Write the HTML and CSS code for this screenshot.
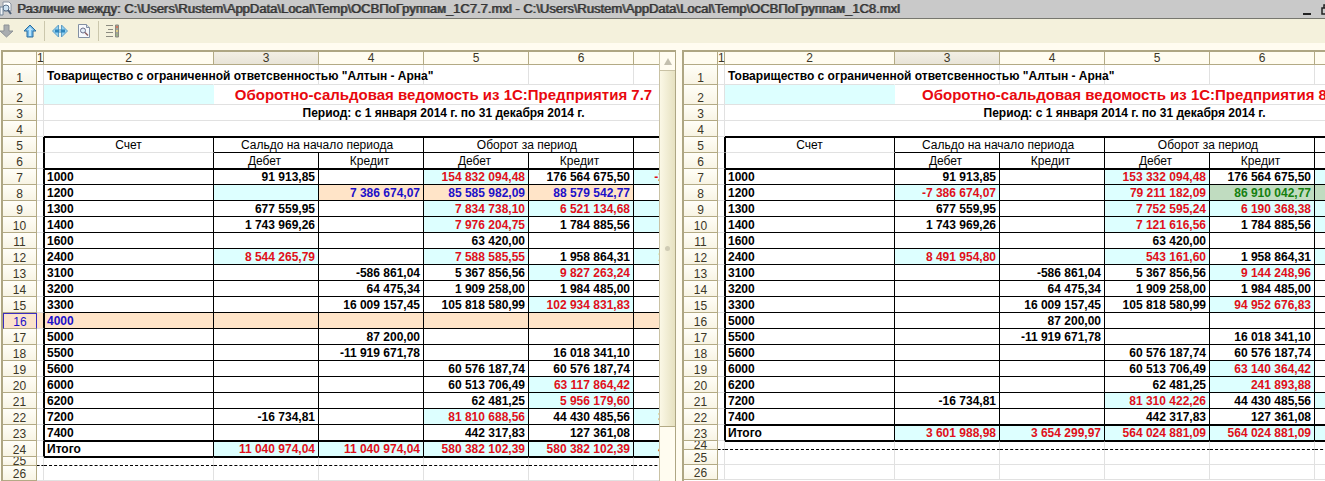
FILE: index.html
```html
<!DOCTYPE html>
<html lang="ru">
<head>
<meta charset="utf-8">
<title>Различие между файлами</title>
<link rel="stylesheet" href="styles.css">
</head>
<body>
<header class="titlebar">
  <svg class="app-icon" width="12" height="16" viewBox="0 0 12 16" aria-hidden="true"><path d="M3 1h6l2 2v7H3z" fill="#fff" stroke="#8a93a0"/><circle cx="6" cy="7" r="3" fill="#cfe3f2" stroke="#5a7088"/><path d="M8 9l3 4" stroke="#4e6078" stroke-width="2"/><path d="M0 6h3v8H0z" fill="#f4f7fa" stroke="#6f8296"/></svg>
  <h1>Различие между: C:\Users\Rustem\AppData\Local\Temp\ОСВПоГруппам_1С7.7.mxl - C:\Users\Rustem\AppData\Local\Temp\ОСВПоГруппам_1С8.mxl</h1>
  <div class="window-buttons">
    <button type="button" aria-label="Свернуть"><svg width="8" height="12" viewBox="0 0 8 12"><path d="M0 11h8" stroke="#222" stroke-width="2"/></svg></button>
    <button type="button" aria-label="Восстановить"><svg width="10" height="12" viewBox="0 0 10 12"><path d="M1 5h6v6H1z M3 5V2h6v6H7" fill="none" stroke="#222" stroke-width="1.5"/></svg></button>
  </div>
</header>
<nav class="toolbar">
  <button type="button" aria-label="Следующее различие"><svg width="14" height="14" viewBox="0 0 14 14"><path d="M4 1h5v6h4l-6.500 6L0 7h4z" fill="#a9adb0" stroke="#8d9296"/></svg></button>
  <button type="button" aria-label="Предыдущее различие"><svg width="14" height="14" viewBox="0 0 14 14"><path d="M7 1l6 6h-3v6H4V7H1z" fill="#6fb6e6" stroke="#2c6f9f"/><path d="M7 3l3 3H8v6H6V6H4z" fill="#b9e4fb"/></svg></button>
  <span class="divider"></span>
  <button type="button" aria-label="Сравнить"><svg width="16" height="14" viewBox="0 0 16 14"><path d="M6.500 1v12L.5 7zM9.500 1v12l6-6z" fill="#8fd0f2" stroke="#5f9cc2"/><path d="M3 7h10" stroke="#2f86bd" stroke-width="3"/><path d="M8 0v14" stroke="#e8f6ff" stroke-dasharray="2 1"/></svg></button>
  <button type="button" aria-label="Просмотр"><svg width="14" height="14" viewBox="0 0 14 14"><path d="M1.500.5h8l3 3v10h-11z" fill="#f7f9fc" stroke="#8390a3"/><path d="M9.500.5v3h3" fill="#d5dde7" stroke="#8390a3"/><circle cx="6" cy="6.500" r="2.500" fill="#e3edf6" stroke="#6c6f8b"/><path d="M8 8.500l3 3" stroke="#8b5f62" stroke-width="1.500"/></svg></button>
  <span class="divider"></span>
  <button type="button" aria-label="Список"><svg width="14" height="14" viewBox="0 0 14 14"><path d="M0 1.500h7M2 5.500h5M0 8.500h7M0 12.500h7" stroke="#8b8b80"/><path d="M9.500 1h3v12h-3z" fill="#a3a399" stroke="#8b8b80"/><path d="M11 2v2" stroke="#d27a63" stroke-width="2"/><path d="M11 6v2" stroke="#dccb80" stroke-width="2"/><path d="M11 10v2" stroke="#9ab384" stroke-width="2"/></svg></button>
</nav>
<main class="panes">
<section class="pane pane-left" aria-label="1С 7.7">
<div class="view">
<table>
<colgroup><col class="c-num"><col class="c-gap"><col class="c-acc"><col><col><col><col><col><col></colgroup>
<thead><tr><th></th><th>1</th><th>2</th><th class="current">3</th><th>4</th><th>5</th><th>6</th><th></th><th></th></tr></thead>
<tbody>
<tr class="tall"><th>1</th><td></td><td class="org">Товарищество с ограниченной ответсвенностью "Алтын - Арна"</td><td></td><td></td><td></td><td></td><td></td><td></td></tr>
<tr class="tall"><th>2</th><td></td><td class="title" colspan="7">Оборотно-сальдовая ведомость из 1С:Предприятия 7.7</td></tr>
<tr><th>3</th><td></td><td class="period" colspan="7">Период: с 1 января 2014 г. по 31 декабря 2014 г.</td></tr>
<tr class="above"><th>4</th><td></td><td colspan="7"></td></tr>
<tr class="grid head"><th>5</th><td></td><td class="open">Счет</td><td colspan="2">Сальдо на начало периода</td><td colspan="2">Оборот за период</td><td colspan="2"></td></tr>
<tr class="grid head"><th>6</th><td></td><td></td><td>Дебет</td><td>Кредит</td><td>Дебет</td><td>Кредит</td><td></td><td></td></tr>
<tr class="grid edge"><th>7</th><td></td><td>1000</td><td>91 913,85</td><td></td><td class="diff">154 832 094,48</td><td>176 564 675,50</td><td class="diff">-21 640 667,17</td><td></td></tr>
<tr class="grid"><th>8</th><td></td><td>1200</td><td class="diff"></td><td class="mark">7 386 674,07</td><td class="mark">85 585 982,09</td><td class="mark">88 579 542,77</td><td></td><td></td></tr>
<tr class="grid"><th>9</th><td></td><td>1300</td><td>677 559,95</td><td></td><td class="diff">7 834 738,10</td><td class="diff">6 521 134,68</td><td class="diff"></td><td></td></tr>
<tr class="grid"><th>10</th><td></td><td>1400</td><td>1 743 969,26</td><td></td><td class="diff">7 976 204,75</td><td>1 784 885,56</td><td class="diff"></td><td></td></tr>
<tr class="grid"><th>11</th><td></td><td>1600</td><td></td><td></td><td>63 420,00</td><td></td><td></td><td></td></tr>
<tr class="grid"><th>12</th><td></td><td>2400</td><td class="diff">8 544 265,79</td><td></td><td class="diff">7 588 585,55</td><td>1 958 864,31</td><td class="diff">14 173 987,03</td><td></td></tr>
<tr class="grid"><th>13</th><td></td><td>3100</td><td></td><td>-586 861,04</td><td>5 367 856,56</td><td class="diff">9 827 263,24</td><td></td><td></td></tr>
<tr class="grid"><th>14</th><td></td><td>3200</td><td></td><td>64 475,34</td><td>1 909 258,00</td><td>1 984 485,00</td><td></td><td></td></tr>
<tr class="grid"><th>15</th><td></td><td>3300</td><td></td><td>16 009 157,45</td><td>105 818 580,99</td><td class="diff">102 934 831,83</td><td></td><td></td></tr>
<tr class="grid selected"><th>16</th><td></td><td>4000</td><td></td><td></td><td></td><td></td><td></td><td></td></tr>
<tr class="grid"><th>17</th><td></td><td>5000</td><td></td><td>87 200,00</td><td></td><td></td><td></td><td></td></tr>
<tr class="grid"><th>18</th><td></td><td>5500</td><td></td><td>-11 919 671,78</td><td></td><td>16 018 341,10</td><td></td><td></td></tr>
<tr class="grid"><th>19</th><td></td><td>5600</td><td></td><td></td><td>60 576 187,74</td><td>60 576 187,74</td><td></td><td></td></tr>
<tr class="grid"><th>20</th><td></td><td>6000</td><td></td><td></td><td>60 513 706,49</td><td class="diff">63 117 864,42</td><td></td><td></td></tr>
<tr class="grid"><th>21</th><td></td><td>6200</td><td></td><td></td><td>62 481,25</td><td class="diff">5 956 179,60</td><td></td><td></td></tr>
<tr class="grid"><th>22</th><td></td><td>7200</td><td>-16 734,81</td><td></td><td class="diff">81 810 688,56</td><td>44 430 485,56</td><td class="diff">37 363 468,19</td><td></td></tr>
<tr class="grid"><th>23</th><td></td><td>7400</td><td></td><td></td><td>442 317,83</td><td>127 361,08</td><td></td><td></td></tr>
<tr class="grid edge"><th>24</th><td></td><td>Итого</td><td class="diff">11 040 974,04</td><td class="diff">11 040 974,04</td><td class="diff">580 382 102,39</td><td class="diff">580 382 102,39</td><td class="diff">43 518 246,97</td><td></td></tr>
<tr class="break"><th><span>25</span></th><td></td><td></td><td></td><td></td><td></td><td></td><td></td><td></td></tr>
<tr class="low"><th>26</th><td></td><td></td><td></td><td></td><td></td><td></td><td></td><td></td></tr>
</tbody>
</table>
</div>
<div class="scrollbar">
  <button type="button" class="scroll-up" aria-label="Вверх"><svg width="8" height="7" viewBox="0 0 8 7"><path d="M4 0l4 7H0z" fill="#c3bfae"/></svg></button>
  <div class="thumb"><span class="grip"></span></div>
  <div class="track"></div>
</div>
</section>
<section class="pane" aria-label="1С 8">
<div class="view">
<table>
<colgroup><col class="c-num"><col class="c-gap"><col class="c-acc"><col><col><col><col><col><col></colgroup>
<thead><tr><th></th><th>1</th><th>2</th><th class="current">3</th><th>4</th><th>5</th><th>6</th><th></th><th></th></tr></thead>
<tbody>
<tr class="tall"><th>1</th><td></td><td class="org">Товарищество с ограниченной ответсвенностью "Алтын - Арна"</td><td></td><td></td><td></td><td></td><td></td><td></td></tr>
<tr class="tall"><th>2</th><td></td><td class="title" colspan="7">Оборотно-сальдовая ведомость из 1С:Предприятия 8</td></tr>
<tr><th>3</th><td></td><td class="period" colspan="7">Период: с 1 января 2014 г. по 31 декабря 2014 г.</td></tr>
<tr class="above"><th>4</th><td></td><td colspan="7"></td></tr>
<tr class="grid head"><th>5</th><td></td><td class="open">Счет</td><td colspan="2">Сальдо на начало периода</td><td colspan="2">Оборот за период</td><td colspan="2"></td></tr>
<tr class="grid head"><th>6</th><td></td><td></td><td>Дебет</td><td>Кредит</td><td>Дебет</td><td>Кредит</td><td></td><td></td></tr>
<tr class="grid edge"><th>7</th><td></td><td>1000</td><td>91 913,85</td><td></td><td class="diff">153 332 094,48</td><td>176 564 675,50</td><td class="diff"></td><td></td></tr>
<tr class="grid"><th>8</th><td></td><td>1200</td><td class="diff">-7 386 674,07</td><td></td><td class="diff">79 211 182,09</td><td class="found">86 910 042,77</td><td class="found"></td><td></td></tr>
<tr class="grid"><th>9</th><td></td><td>1300</td><td>677 559,95</td><td></td><td class="diff">7 752 595,24</td><td class="diff">6 190 368,38</td><td class="diff"></td><td></td></tr>
<tr class="grid"><th>10</th><td></td><td>1400</td><td>1 743 969,26</td><td></td><td class="diff">7 121 616,56</td><td>1 784 885,56</td><td class="diff"></td><td></td></tr>
<tr class="grid"><th>11</th><td></td><td>1600</td><td></td><td></td><td>63 420,00</td><td></td><td></td><td></td></tr>
<tr class="grid"><th>12</th><td></td><td>2400</td><td class="diff">8 491 954,80</td><td></td><td class="diff">543 161,60</td><td>1 958 864,31</td><td class="diff"></td><td></td></tr>
<tr class="grid"><th>13</th><td></td><td>3100</td><td></td><td>-586 861,04</td><td>5 367 856,56</td><td class="diff">9 144 248,96</td><td></td><td></td></tr>
<tr class="grid"><th>14</th><td></td><td>3200</td><td></td><td>64 475,34</td><td>1 909 258,00</td><td>1 984 485,00</td><td></td><td></td></tr>
<tr class="grid"><th>15</th><td></td><td>3300</td><td></td><td>16 009 157,45</td><td>105 818 580,99</td><td class="diff">94 952 676,83</td><td></td><td></td></tr>
<tr class="grid"><th>16</th><td></td><td>5000</td><td></td><td>87 200,00</td><td></td><td></td><td></td><td></td></tr>
<tr class="grid"><th>17</th><td></td><td>5500</td><td></td><td>-11 919 671,78</td><td></td><td>16 018 341,10</td><td></td><td></td></tr>
<tr class="grid"><th>18</th><td></td><td>5600</td><td></td><td></td><td>60 576 187,74</td><td>60 576 187,74</td><td></td><td></td></tr>
<tr class="grid"><th>19</th><td></td><td>6000</td><td></td><td></td><td>60 513 706,49</td><td class="diff">63 140 364,42</td><td></td><td></td></tr>
<tr class="grid"><th>20</th><td></td><td>6200</td><td></td><td></td><td>62 481,25</td><td class="diff">241 893,88</td><td></td><td></td></tr>
<tr class="grid"><th>21</th><td></td><td>7200</td><td>-16 734,81</td><td></td><td class="diff">81 310 422,26</td><td>44 430 485,56</td><td class="diff"></td><td></td></tr>
<tr class="grid"><th>22</th><td></td><td>7400</td><td></td><td></td><td>442 317,83</td><td>127 361,08</td><td></td><td></td></tr>
<tr class="grid edge"><th>23</th><td></td><td>Итого</td><td class="diff">3 601 988,98</td><td class="diff">3 654 299,97</td><td class="diff">564 024 881,09</td><td class="diff">564 024 881,09</td><td class="diff"></td><td></td></tr>
<tr class="break"><th><span>24</span></th><td></td><td></td><td></td><td></td><td></td><td></td><td></td><td></td></tr>
<tr class="low"><th>25</th><td></td><td></td><td></td><td></td><td></td><td></td><td></td><td></td></tr>
<tr class="low"><th>26</th><td></td><td></td><td></td><td></td><td></td><td></td><td></td><td></td></tr>
</tbody>
</table>
</div>
</section>
</main>
</body>
</html>
```

FILE: styles.css
```css
* { box-sizing: border-box; }
body {
  margin: 0;
  height: 100vh;
  overflow: hidden;
  display: flex;
  flex-direction: column;
  background: #fffcf0;
  font: 12px/13px "Liberation Sans", Arial, sans-serif;
  color: #000;
}
button { border: 0; padding: 0; background: none; display: block; }
svg { display: block; }

.titlebar {
  flex: none;
  height: 19px;
  display: flex;
  align-items: center;
  gap: 5px;
  background: #c9c9c9;
  border-bottom: 1px solid #77776f;
  overflow: hidden;
}
.titlebar h1 {
  flex: 1;
  margin: 0;
  font-size: 13px;
  line-height: 18px;
  font-weight: normal;
  color: #333;
  text-shadow: 1px 0 #555;
  white-space: nowrap;
}
.app-icon { flex: none; }
.window-buttons { display: flex; gap: 10px; margin-right: -6px; }

.toolbar {
  flex: none;
  height: 24px;
  display: flex;
  align-items: center;
  gap: 7px;
  background: #f4f1dc;
}
.toolbar button + button { margin-left: 2px; }
.divider { width: 1px; height: 20px; background: #cbc7ac; }

.panes {
  flex: 1;
  min-height: 0;
  display: grid;
  grid-template-columns: 676fr 644fr;
  gap: 5px;
  padding-top: 7px;
}
.pane {
  min-width: 0;
  display: flex;
  border: solid #aea683;
  border-width: 2px 0 0 2px;
  margin-left: 1px;
}
.pane-left { border-right-width: 1px; }
.view { flex: 1; min-width: 0; overflow: hidden; background: #fff; }

table { width: 841px; table-layout: fixed; border-collapse: separate; border-spacing: 0; }
col { width: 105px; }
.c-num { width: 34px; }
.c-gap { width: 7px; }
.c-acc { width: 170px; }
th, td {
  height: 16px;
  padding: 0;
  border: solid #e1e1e1;
  border-width: 0 1px 1px 0;
  white-space: nowrap;
  vertical-align: bottom;
}
th {
  font-weight: normal;
  color: #3b3626;
  border-color: #b3aa85;
  background: linear-gradient(#fffef8, #f8f4e4);
  line-height: 12px;
}
thead th { height: 13px; background: #fffcf0; }
thead .current { background: linear-gradient(#f3efe4, #e8e4d8); }
.tall th, .tall td { height: 20px; }
.low th, .low td { height: 15px; }
.org, .period, .title { font-weight: bold; }
.org { padding-left: 3px; line-height: 15px; border-right-color: transparent; }
.period, .title { text-align: center; }
.title {
  font-size: 15px;
  line-height: 18px;
  color: #e8080e;
  background: linear-gradient(#dff, #dff) no-repeat 0 0 / 170px 100%;
}
.above td:last-child { border-bottom-color: #000; }

.grid td { border-color: #000; font-weight: bold; text-align: right; padding-right: 3px; line-height: 14px; }
.grid td:nth-child(2) { border-bottom-color: #e1e1e1; padding: 0; }
.grid td:nth-child(3) { border-left-width: 1px; text-align: left; padding-left: 2px; }
.grid.head td, .grid.head td:nth-child(3) { font-weight: normal; text-align: center; }
.grid .open, .grid.head .open { border-bottom-color: #e1e1e1; }
.above + .grid td:nth-child(n+3),
.edge td:nth-child(n+3) { border-top-width: 1px; line-height: 13px; }
.grid .diff { color: #e0101a; background: #dff; }
.grid .mark { color: #1c10c8; background: #ffe4c8; }
.grid .found { color: #14800f; background: #c0dcc0; }
.selected td { background: #ffe4c8; color: #1c10c8; }
.selected th { color: #1c10c8; background: #fbe3cb; border: 1px solid #3a2cc0; border-bottom-color: #b3aa85; }

.break th, .break td { height: 9px; line-height: 8px; }
.break td { border-bottom: 1px dashed #000; }
.break td:nth-child(n+3) { border-top: 1px solid #000; }
.break span { display: flex; align-items: center; justify-content: center; height: 8px; overflow: hidden; }

.scrollbar {
  flex: none;
  width: 16px;
  display: flex;
  flex-direction: column;
  border-left: 1px solid #c9c2a4;
  background: #fffcf0;
}
.scroll-up { height: 19px; display: grid; place-items: center; border-bottom: 1px solid #c9c2a4; background: #fffcf0; }
.thumb {
  flex: 357;
  display: grid;
  place-items: center;
  background: linear-gradient(90deg, #fbf8e6, #e6e1c0);
  border-bottom: 1px solid #b3aa85;
}
.grip { width: 5px; height: 5px; border-radius: 50%; background: #cfcbb4; }
.track { flex: 54; }
```
